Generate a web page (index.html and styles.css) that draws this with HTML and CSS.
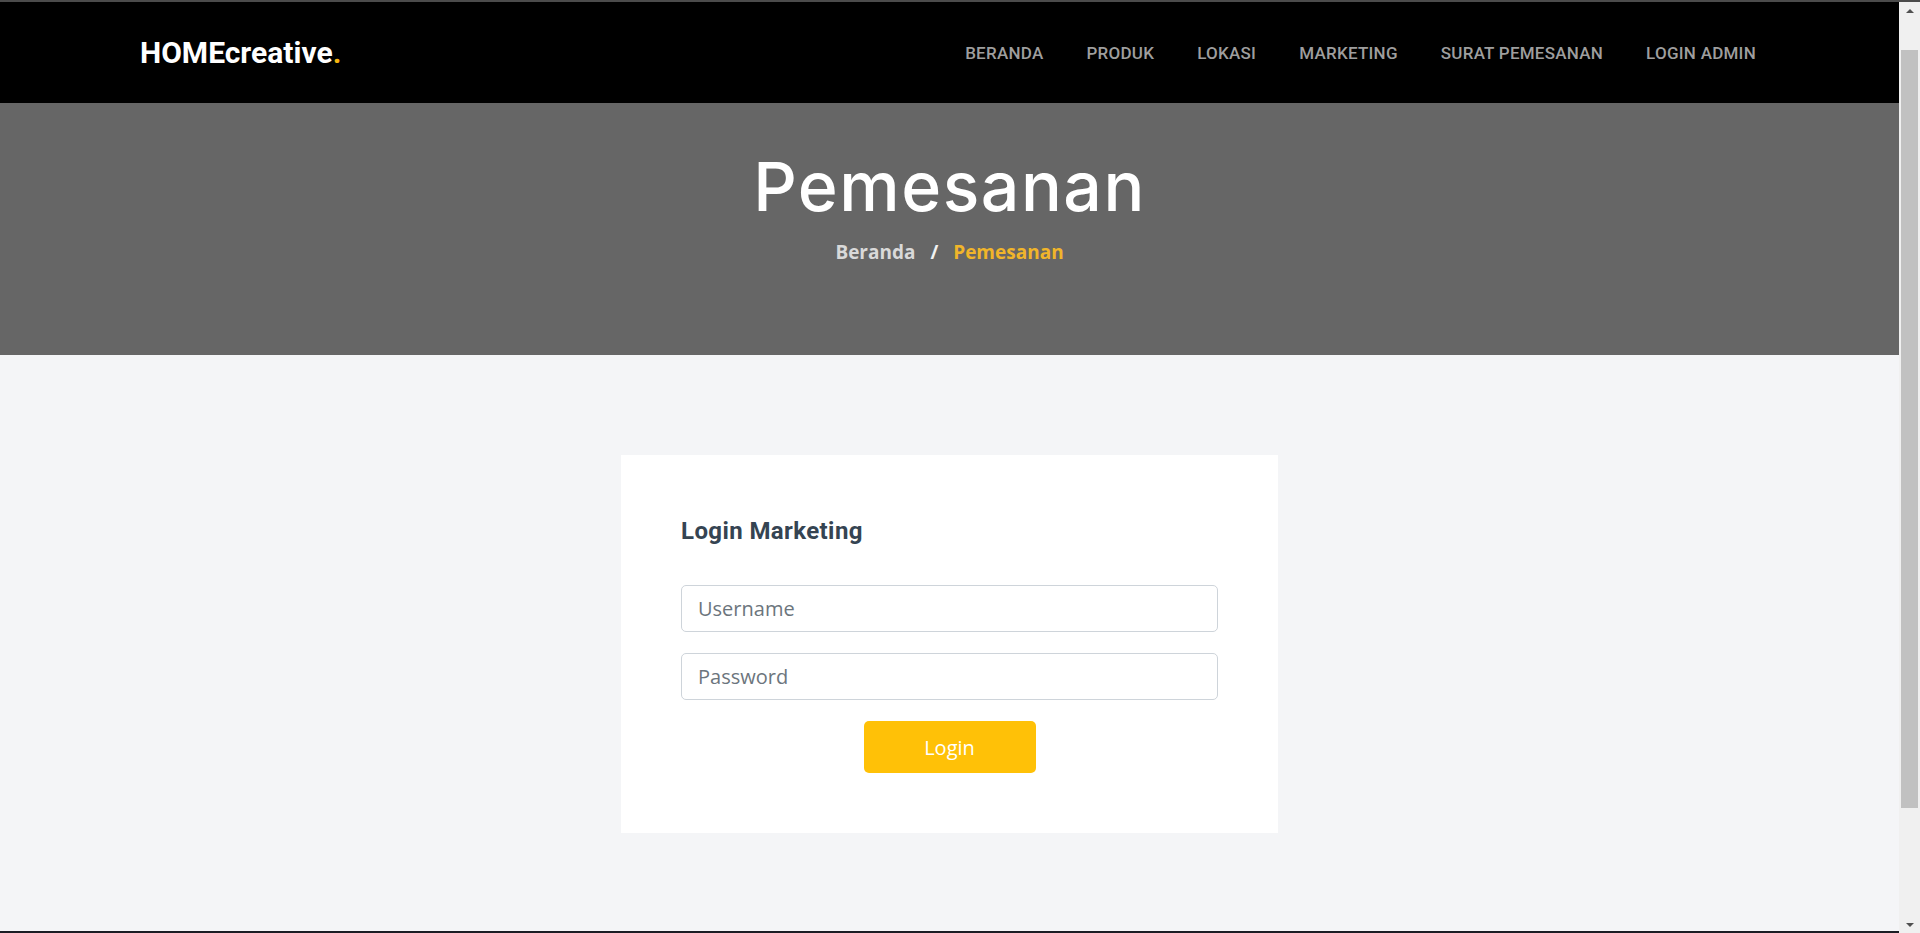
FILE: index.html
```html
<!DOCTYPE html>
<html lang="id">
<head>
<meta charset="utf-8">
<meta name="viewport" content="initial-scale=1">
<title>Pemesanan - HOMEcreative</title>
<link rel="stylesheet" href="styles.css">
</head>
<body>
<div class="window">

<div class="page">
    <header class="topbar">
        <a class="brand" href="#">HOMEcreative<span class="dot">.</span></a>
        <nav class="menu">
            <a href="#">BERANDA</a>
            <a href="#">PRODUK</a>
            <a href="#">LOKASI</a>
            <a href="#">MARKETING</a>
            <a href="#">SURAT PEMESANAN</a>
            <a href="#">LOGIN ADMIN</a>
        </nav>
    </header>

    <section class="hero">
        <h1>Pemesanan</h1>
        <p class="crumbs">
            <a href="#">Beranda</a>
            <span class="slash">/</span>
            <span class="current">Pemesanan</span>
        </p>
    </section>

    <main class="content">
        <form class="card" action="#" onsubmit="return false">
            <h3>Login Marketing</h3>
            <input type="text" placeholder="Username">
            <input type="password" placeholder="Password">
            <div class="actions">
                <button type="submit">Login</button>
            </div>
        </form>
    </main>
</div>

<div class="scrollbar">
    <div class="arrow up"></div>
    <div class="track"><div class="thumb"></div></div>
    <div class="arrow down"></div>
</div>

</div>
</body>
</html>
```

FILE: styles.css
```css
html, body {
    margin: 0;
    height: 100%;
}

body {
    font-family: 'Open Sans', sans-serif;
    overflow: hidden;
}

a { text-decoration: none; }

.window {
    height: 100%;
    box-sizing: border-box;
    border-top: 2px solid #4b4b4b;
    display: flex;
}

.page {
    flex: 1;
    display: flex;
    flex-direction: column;
    background-color: #f4f5f7;
    border-bottom: 2px solid #1b1d24;
    overflow: hidden;
}

/* top navigation */
.topbar {
    height: 101px;
    flex-shrink: 0;
    background-color: #000;
    display: flex;
    align-items: center;
    justify-content: space-between;
    padding: 0 143px 0 140px;
}

.brand {
    font-family: Roboto, sans-serif;
    font-weight: 700;
    font-size: 30px;
    color: #fff;
}

.brand .dot { color: #f5b50f; }

.menu {
    display: flex;
    gap: 43px;
}

.menu a {
    font-family: Roboto, sans-serif;
    font-weight: 500;
    font-size: 17px;
    letter-spacing: 0.25px;
    color: #9e9e9e;
}

/* page title */
.hero {
    height: 252px;
    flex-shrink: 0;
    background-color: #666;
    text-align: center;
    box-sizing: border-box;
    padding-top: 43px;
}

.hero h1 {
    margin: 0;
    font-family: Inter, sans-serif;
    font-weight: 500;
    font-size: 68px;
    line-height: 80px;
    letter-spacing: 1.5px;
    color: #fff;
}

.crumbs {
    margin: 14px 0 0;
    font-size: 19px;
    font-weight: 700;
    line-height: 24px;
}

.crumbs a { color: #d9d9d9; }
.crumbs .slash { color: #f2f2f2; margin: 0 10px; }
.crumbs .current { color: #f0b52a; }

/* login card */
.content {
    flex: 1;
    padding-top: 100px;
}

.card {
    width: 657px;
    margin: 0 auto;
    box-sizing: border-box;
    background-color: #fff;
    padding: 60px;
}

.card h3 {
    margin: 0 0 38px;
    font-family: Roboto, sans-serif;
    font-weight: 700;
    font-size: 24px;
    line-height: 32px;
    letter-spacing: 0.4px;
    color: #354452;
}

.card input {
    display: block;
    width: 100%;
    height: 47px;
    box-sizing: border-box;
    margin-bottom: 21px;
    padding: 0 16px;
    border: 1px solid #ced4da;
    border-radius: 5px;
    font-family: 'Open Sans', sans-serif;
    font-size: 20px;
    color: #495057;
}

.card input::placeholder { color: #6c757d; }

.actions { text-align: center; }

.card button {
    width: 172px;
    height: 52px;
    border: 0;
    border-radius: 5px;
    background-color: #ffc107;
    color: #fff;
    font-family: 'Open Sans', sans-serif;
    font-size: 20px;
}

/* fake browser scrollbar */
.scrollbar {
    width: 21px;
    flex-shrink: 0;
    background-color: #f0f0f0;
    display: flex;
    flex-direction: column;
}

.arrow {
    height: 17px;
    display: flex;
    align-items: center;
    justify-content: center;
}

.arrow::after {
    content: "";
    border-left: 4px solid transparent;
    border-right: 4px solid transparent;
}

.arrow.up::after   { border-bottom: 4px solid #505050; }
.arrow.down::after { border-top: 4px solid #505050; }

.track {
    flex: 1;
    padding: 31px 2px 0;
}

.thumb {
    height: 758px;
    background-color: #c1c1c1;
}
```
